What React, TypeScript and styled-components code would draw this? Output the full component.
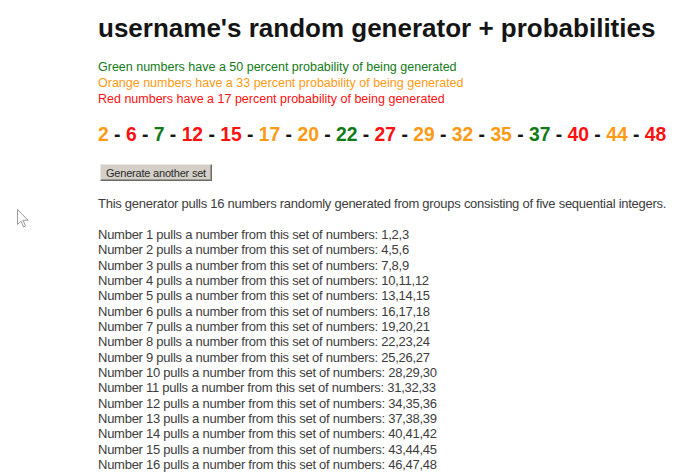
import React from "react";
import styled, { createGlobalStyle } from "styled-components";

const GlobalStyle = createGlobalStyle`
  html, body {
    margin: 0;
    padding: 0;
    background: #ffffff;
  }
  body {
    font-family: "Liberation Sans", Arial, sans-serif;
  }
`;

const COLOR = {
  green: "#127a16",
  orange: "#ff9a14",
  red: "#ff1010",
  text: "#3c3c3c",
  title: "#151515",
};

type Tone = "green" | "orange" | "red";

const Page = styled.div`
  position: relative;
  width: 680px;
  height: 476px;
  overflow: hidden;
  padding: 12px 0 0 98px;
  box-sizing: border-box;
`;

const Title = styled.h1`
  margin: 0;
  font-size: 26px;
  font-weight: bold;
  color: ${COLOR.title};
  line-height: 32px;
`;

const Legend = styled.div`
  margin-top: 15px;
  display: flex;
  flex-direction: column;
`;

const LegendLine = styled.div<{ $tone: Tone }>`
  font-size: 12.5px;
  line-height: 16px;
  color: ${(p) => COLOR[p.$tone]};
`;

const NumberRow = styled.div`
  margin-top: 16px;
  font-size: 19.3px;
  font-weight: bold;
  line-height: 24px;
  color: ${COLOR.title};
  white-space: nowrap;
`;

const Pick = styled.span<{ $tone: Tone }>`
  color: ${(p) => COLOR[p.$tone]};
`;

const GenerateButton = styled.button`
  margin-top: 17px;
  margin-left: 2px;
  padding: 1px 5px 0;
  height: 17px;
  font-family: "Liberation Sans", Arial, sans-serif;
  font-size: 11px;
  letter-spacing: -0.2px;
  color: #2a2a2a;
  background: #d4d0c8;
  border: 1px solid;
  border-color: #e8e6e0 #6a6a6a #6a6a6a #e8e6e0;
  box-shadow: inset -1px -1px 0 #a09c94;
  cursor: pointer;
`;

const Intro = styled.p`
  margin: 15px 0 0;
  font-size: 13px;
  letter-spacing: -0.26px;
  line-height: 16px;
  color: ${COLOR.text};
  white-space: nowrap;
`;

const SetList = styled.div`
  margin-top: 15px;
  display: flex;
  flex-direction: column;
`;

const SetLine = styled.div`
  font-size: 13px;
  letter-spacing: -0.26px;
  line-height: 15.33px;
  color: ${COLOR.text};
  white-space: nowrap;
`;

const Pointer = styled.svg`
  position: absolute;
  left: 17px;
  top: 209px;
`;

const picks: { n: number; tone: Tone }[] = [
  { n: 2, tone: "orange" },
  { n: 6, tone: "red" },
  { n: 7, tone: "green" },
  { n: 12, tone: "red" },
  { n: 15, tone: "red" },
  { n: 17, tone: "orange" },
  { n: 20, tone: "orange" },
  { n: 22, tone: "green" },
  { n: 27, tone: "red" },
  { n: 29, tone: "orange" },
  { n: 32, tone: "orange" },
  { n: 35, tone: "orange" },
  { n: 37, tone: "green" },
  { n: 40, tone: "red" },
  { n: 44, tone: "orange" },
  { n: 48, tone: "red" },
];

const sets = Array.from({ length: 16 }, (_, i) => {
  const start = i * 3 + 1;
  return [start, start + 1, start + 2].join(",");
});

const App = () => {
  return (
    <>
      <GlobalStyle />
      <Page>
        <Title>username's random generator + probabilities</Title>
        <Legend>
          <LegendLine $tone="green">
            Green numbers have a 50 percent probability of being generated
          </LegendLine>
          <LegendLine $tone="orange">
            Orange numbers have a 33 percent probability of being generated
          </LegendLine>
          <LegendLine $tone="red">
            Red numbers have a 17 percent probability of being generated
          </LegendLine>
        </Legend>
        <NumberRow>
          {picks.map((p, i) => (
            <React.Fragment key={p.n}>
              {i > 0 && " - "}
              <Pick $tone={p.tone}>{p.n}</Pick>
            </React.Fragment>
          ))}
        </NumberRow>
        <GenerateButton>Generate another set</GenerateButton>
        <Intro>
          This generator pulls 16 numbers randomly generated from groups
          consisting of five sequential integers.
        </Intro>
        <SetList>
          {sets.map((s, i) => (
            <SetLine key={i}>
              Number {i + 1} pulls a number from this set of numbers: {s}
            </SetLine>
          ))}
        </SetList>
        <Pointer width="12" height="19" viewBox="0 0 12 19">
          <path
            d="M0.5 0.5 L0.5 15.5 L4 12 L6.5 18 L8.5 17 L6 11.2 L11 11.2 Z"
            fill="#ffffff"
            stroke="#9a9a9a"
            strokeWidth="1"
            strokeLinejoin="round"
          />
        </Pointer>
      </Page>
    </>
  );
};

export default App;
